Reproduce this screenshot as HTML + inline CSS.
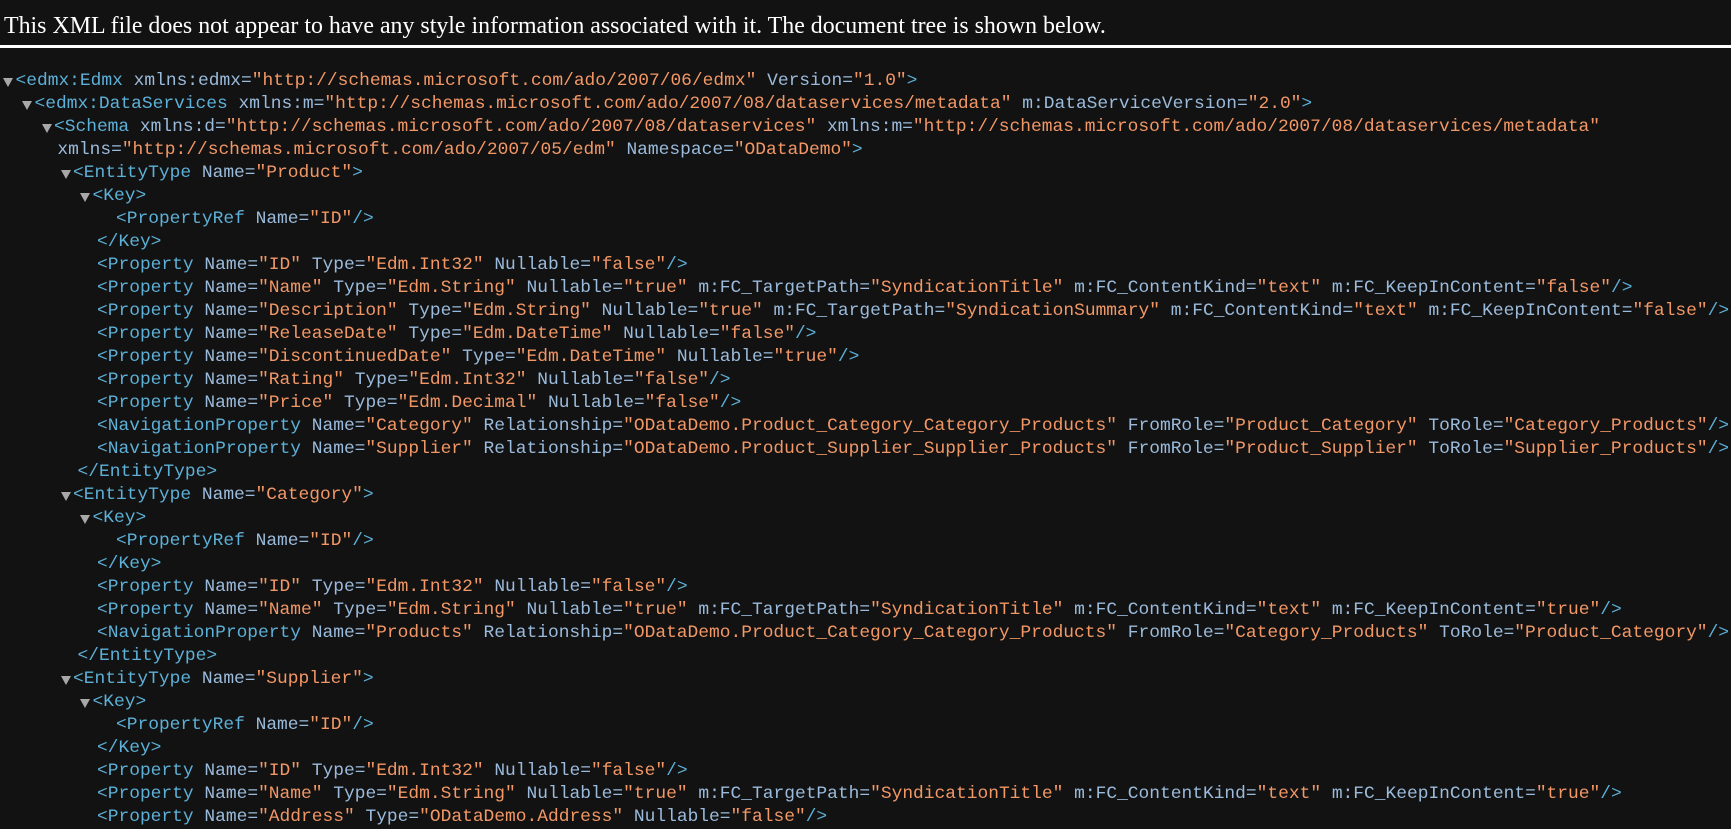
<!DOCTYPE html>
<html><head><meta charset="utf-8"><style>
html,body{margin:0;padding:0;background:#121212;width:1731px;height:814px;overflow:hidden}
.hd{position:absolute;left:4px;top:12px;font-family:"Liberation Serif",serif;font-size:23.9px;line-height:28px;color:#fff;white-space:nowrap}
.hr{position:absolute;left:0;top:45px;width:1731px;height:3px;background:#fff}
.code{position:absolute;left:0;top:70px;font-family:"Liberation Mono",monospace;font-size:17.9px;line-height:23px;color:#5db0d7}
.l{position:relative;height:23px;white-space:pre}
.t{color:#5db0d7}.a{color:#9bbbdc}.v{color:#f29766}
.ar{position:absolute;width:0;height:0;border-left:5px solid transparent;border-right:5px solid transparent;border-top:9px solid #a8a8a8;top:8px}
</style></head><body>
<div class="hd">This XML file does not appear to have any style information associated with it. The document tree is shown below.</div>
<div class="hr"></div>
<div class="code"><div class="l" style="padding-left:15.5px"><i class="ar" style="left:3px"></i><span class="t">&lt;edmx:Edmx</span> <span class="a">xmlns:edmx=</span><span class="v">"http://schemas.microsoft.com/ado/2007/06/edmx"</span> <span class="a">Version=</span><span class="v">"1.0"</span>&gt;</div><div class="l" style="padding-left:34.5px"><i class="ar" style="left:22px"></i>&lt;edmx:DataServices <span class="a">xmlns:m=</span><span class="v">"http://schemas.microsoft.com/ado/2007/08/dataservices/metadata"</span> <span class="a">m:DataServiceVersion=</span><span class="v">"2.0"</span>&gt;</div><div class="l" style="padding-left:54px"><i class="ar" style="left:42px"></i>&lt;Schema <span class="a">xmlns:d=</span><span class="v">"http://schemas.microsoft.com/ado/2007/08/dataservices"</span> <span class="a">xmlns:m=</span><span class="v">"http://schemas.microsoft.com/ado/2007/08/dataservices/metadata"</span></div><div class="l" style="padding-left:57.4px"><span class="a">xmlns=</span><span class="v">"http://schemas.microsoft.com/ado/2007/05/edm"</span> <span class="a">Namespace=</span><span class="v">"ODataDemo"</span>&gt;</div><div class="l" style="padding-left:73px"><i class="ar" style="left:61px"></i>&lt;EntityType <span class="a">Name=</span><span class="v">"Product"</span>&gt;</div><div class="l" style="padding-left:92.5px"><i class="ar" style="left:80px"></i>&lt;Key&gt;</div><div class="l" style="padding-left:116px">&lt;PropertyRef <span class="a">Name=</span><span class="v">"ID"</span>/&gt;</div><div class="l" style="padding-left:97px">&lt;/Key&gt;</div><div class="l" style="padding-left:97px">&lt;Property <span class="a">Name=</span><span class="v">"ID"</span> <span class="a">Type=</span><span class="v">"Edm.Int32"</span> <span class="a">Nullable=</span><span class="v">"false"</span>/&gt;</div><div class="l" style="padding-left:97px">&lt;Property <span class="a">Name=</span><span class="v">"Name"</span> <span class="a">Type=</span><span class="v">"Edm.String"</span> <span class="a">Nullable=</span><span class="v">"true"</span> <span class="a">m:FC_TargetPath=</span><span class="v">"SyndicationTitle"</span> <span class="a">m:FC_ContentKind=</span><span class="v">"text"</span> <span class="a">m:FC_KeepInContent=</span><span class="v">"false"</span>/&gt;</div><div class="l" style="padding-left:97px">&lt;Property <span class="a">Name=</span><span class="v">"Description"</span> <span class="a">Type=</span><span class="v">"Edm.String"</span> <span class="a">Nullable=</span><span class="v">"true"</span> <span class="a">m:FC_TargetPath=</span><span class="v">"SyndicationSummary"</span> <span class="a">m:FC_ContentKind=</span><span class="v">"text"</span> <span class="a">m:FC_KeepInContent=</span><span class="v">"false"</span>/&gt;</div><div class="l" style="padding-left:97px">&lt;Property <span class="a">Name=</span><span class="v">"ReleaseDate"</span> <span class="a">Type=</span><span class="v">"Edm.DateTime"</span> <span class="a">Nullable=</span><span class="v">"false"</span>/&gt;</div><div class="l" style="padding-left:97px">&lt;Property <span class="a">Name=</span><span class="v">"DiscontinuedDate"</span> <span class="a">Type=</span><span class="v">"Edm.DateTime"</span> <span class="a">Nullable=</span><span class="v">"true"</span>/&gt;</div><div class="l" style="padding-left:97px">&lt;Property <span class="a">Name=</span><span class="v">"Rating"</span> <span class="a">Type=</span><span class="v">"Edm.Int32"</span> <span class="a">Nullable=</span><span class="v">"false"</span>/&gt;</div><div class="l" style="padding-left:97px">&lt;Property <span class="a">Name=</span><span class="v">"Price"</span> <span class="a">Type=</span><span class="v">"Edm.Decimal"</span> <span class="a">Nullable=</span><span class="v">"false"</span>/&gt;</div><div class="l" style="padding-left:97px">&lt;NavigationProperty <span class="a">Name=</span><span class="v">"Category"</span> <span class="a">Relationship=</span><span class="v">"ODataDemo.Product_Category_Category_Products"</span> <span class="a">FromRole=</span><span class="v">"Product_Category"</span> <span class="a">ToRole=</span><span class="v">"Category_Products"</span>/&gt;</div><div class="l" style="padding-left:97px">&lt;NavigationProperty <span class="a">Name=</span><span class="v">"Supplier"</span> <span class="a">Relationship=</span><span class="v">"ODataDemo.Product_Supplier_Supplier_Products"</span> <span class="a">FromRole=</span><span class="v">"Product_Supplier"</span> <span class="a">ToRole=</span><span class="v">"Supplier_Products"</span>/&gt;</div><div class="l" style="padding-left:77.5px">&lt;/EntityType&gt;</div><div class="l" style="padding-left:73px"><i class="ar" style="left:61px"></i>&lt;EntityType <span class="a">Name=</span><span class="v">"Category"</span>&gt;</div><div class="l" style="padding-left:92.5px"><i class="ar" style="left:80px"></i>&lt;Key&gt;</div><div class="l" style="padding-left:116px">&lt;PropertyRef <span class="a">Name=</span><span class="v">"ID"</span>/&gt;</div><div class="l" style="padding-left:97px">&lt;/Key&gt;</div><div class="l" style="padding-left:97px">&lt;Property <span class="a">Name=</span><span class="v">"ID"</span> <span class="a">Type=</span><span class="v">"Edm.Int32"</span> <span class="a">Nullable=</span><span class="v">"false"</span>/&gt;</div><div class="l" style="padding-left:97px">&lt;Property <span class="a">Name=</span><span class="v">"Name"</span> <span class="a">Type=</span><span class="v">"Edm.String"</span> <span class="a">Nullable=</span><span class="v">"true"</span> <span class="a">m:FC_TargetPath=</span><span class="v">"SyndicationTitle"</span> <span class="a">m:FC_ContentKind=</span><span class="v">"text"</span> <span class="a">m:FC_KeepInContent=</span><span class="v">"true"</span>/&gt;</div><div class="l" style="padding-left:97px">&lt;NavigationProperty <span class="a">Name=</span><span class="v">"Products"</span> <span class="a">Relationship=</span><span class="v">"ODataDemo.Product_Category_Category_Products"</span> <span class="a">FromRole=</span><span class="v">"Category_Products"</span> <span class="a">ToRole=</span><span class="v">"Product_Category"</span>/&gt;</div><div class="l" style="padding-left:77.5px">&lt;/EntityType&gt;</div><div class="l" style="padding-left:73px"><i class="ar" style="left:61px"></i>&lt;EntityType <span class="a">Name=</span><span class="v">"Supplier"</span>&gt;</div><div class="l" style="padding-left:92.5px"><i class="ar" style="left:80px"></i>&lt;Key&gt;</div><div class="l" style="padding-left:116px">&lt;PropertyRef <span class="a">Name=</span><span class="v">"ID"</span>/&gt;</div><div class="l" style="padding-left:97px">&lt;/Key&gt;</div><div class="l" style="padding-left:97px">&lt;Property <span class="a">Name=</span><span class="v">"ID"</span> <span class="a">Type=</span><span class="v">"Edm.Int32"</span> <span class="a">Nullable=</span><span class="v">"false"</span>/&gt;</div><div class="l" style="padding-left:97px">&lt;Property <span class="a">Name=</span><span class="v">"Name"</span> <span class="a">Type=</span><span class="v">"Edm.String"</span> <span class="a">Nullable=</span><span class="v">"true"</span> <span class="a">m:FC_TargetPath=</span><span class="v">"SyndicationTitle"</span> <span class="a">m:FC_ContentKind=</span><span class="v">"text"</span> <span class="a">m:FC_KeepInContent=</span><span class="v">"true"</span>/&gt;</div><div class="l" style="padding-left:97px">&lt;Property <span class="a">Name=</span><span class="v">"Address"</span> <span class="a">Type=</span><span class="v">"ODataDemo.Address"</span> <span class="a">Nullable=</span><span class="v">"false"</span>/&gt;</div></div>
</body></html>
